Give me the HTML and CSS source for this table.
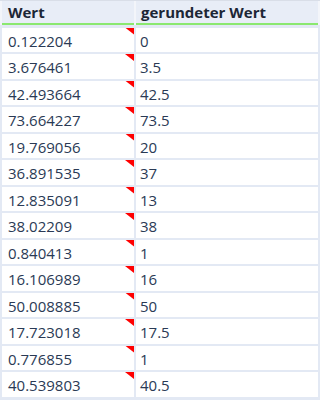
FILE: index.html
```html
<!DOCTYPE html>
<html lang="de">
<head>
<meta charset="utf-8">
<title>Werte</title>
<link rel="stylesheet" href="styles.css">
</head>
<body>
<div class="table">
  <div class="head">
    <div class="hcell">Wert</div>
    <div class="hcell">gerundeter Wert</div>
  </div>
  <div class="rows">
    <div class="cell flag">0.122204</div><div class="cell">0</div>
    <div class="cell flag">3.676461</div><div class="cell">3.5</div>
    <div class="cell flag">42.493664</div><div class="cell">42.5</div>
    <div class="cell flag">73.664227</div><div class="cell">73.5</div>
    <div class="cell flag">19.769056</div><div class="cell">20</div>
    <div class="cell flag">36.891535</div><div class="cell">37</div>
    <div class="cell flag">12.835091</div><div class="cell">13</div>
    <div class="cell flag">38.02209</div><div class="cell">38</div>
    <div class="cell flag">0.840413</div><div class="cell">1</div>
    <div class="cell flag">16.106989</div><div class="cell">16</div>
    <div class="cell flag">50.008885</div><div class="cell">50</div>
    <div class="cell flag">17.723018</div><div class="cell">17.5</div>
    <div class="cell flag">0.776855</div><div class="cell">1</div>
    <div class="cell flag">40.539803</div><div class="cell">40.5</div>
  </div>
</div>
</body>
</html>
```
FILE: styles.css
```css
html, body {
  margin: 0;
  padding: 0;
  height: 100%;
  overflow: hidden;
}
body {
  background: #e3e9f4;
  font-family: "Open Sans", "Noto Sans", sans-serif;
  font-size: 15px;
}
.table {
  padding: 0 2px 0 2px;
}
.head {
  display: grid;
  grid-template-columns: 132px 182px;
  column-gap: 2px;
  background: #f3f5fa;
  border-top: 1px solid #d9dee8;
  margin: 0 -2px;
  padding: 0 2px;
}
.hcell {
  height: 22px;
  line-height: 23px;
  padding: 0 5px;
  background: #e8edf7;
  border-bottom: 2px solid #8be870;
  font-weight: 700;
  color: #1c2636;
}
.hcell:first-child {
  padding-left: 6px;
}
.rows {
  display: grid;
  grid-template-columns: 132px 182px;
  column-gap: 2px;
  row-gap: 2px;
  grid-auto-rows: 24.5px;
  padding-top: 2.5px;
}
.cell {
  position: relative;
  background: #ffffff;
  padding: 1px 5px 0 4px;
  line-height: 24px;
  color: #2a3a55;
}
.cell.flag {
  padding-left: 6px;
}
.cell.flag::after {
  content: "";
  position: absolute;
  top: 0;
  right: 0;
  width: 9px;
  height: 7px;
  background: #ff0000;
  clip-path: polygon(0 0, 100% 0, 100% 100%);
}
```
